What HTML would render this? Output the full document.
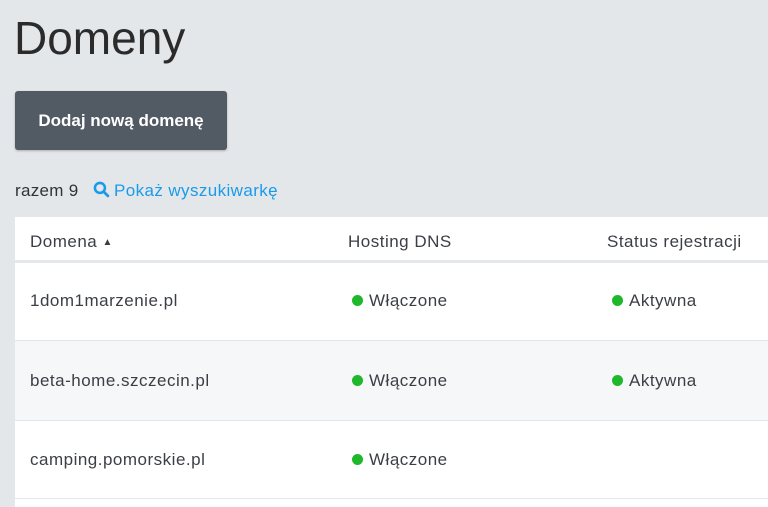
<!DOCTYPE html>
<html><head><meta charset="utf-8"><style>
body{margin:0;width:768px;height:500px;overflow:hidden;background:#e4e7ea;font-family:"Liberation Sans",sans-serif;color:#3b3f45;position:relative}
.a{position:absolute;white-space:nowrap}
h1{position:absolute;left:14px;top:11px;margin:0;font-size:46px;font-weight:normal;color:#2b2b2b;letter-spacing:0px}
.btn{position:absolute;left:15px;top:91px;width:212px;height:59px;background:#525a64;border-radius:3px;color:#fff;font-size:17px;font-weight:bold;line-height:59px;text-align:center;box-shadow:0 1px 2px rgba(0,0,0,.25)}
.tbl{position:absolute;left:15px;top:217px;width:760px;height:290px;background:#fff}
.hdr{position:absolute;left:15px;top:260px;width:760px;height:3px;background:#e4e8ec}
.row2{position:absolute;left:15px;top:340px;width:760px;height:79px;background:#f6f7f9;border-top:1px solid #e2e6ea;border-bottom:1px solid #e2e6ea}
.line{position:absolute;left:15px;top:498px;width:760px;height:1px;background:#e2e6ea}
.t{font-size:17px;color:#3b3f45;letter-spacing:0.5px}
.dot{display:inline-block;width:11px;height:11px;border-radius:50%;background:#1fb82a;margin-right:6px;vertical-align:0}
</style></head><body>
<h1>Domeny</h1>
<div class="btn">Dodaj nową domenę</div>
<div class="a" style="left:15px;top:181px;font-size:17px;color:#333;letter-spacing:0.3px">razem 9</div>
<div class="a" style="left:93px;top:181px;font-size:17px;color:#1a9bea;letter-spacing:0.4px">
<svg width="17" height="17" viewBox="0 0 16 16" style="vertical-align:-2px;margin-right:4px"><circle cx="6.5" cy="6.5" r="4.7" fill="none" stroke="#1a9bea" stroke-width="2.4"/><line x1="10" y1="10" x2="14" y2="14" stroke="#1a9bea" stroke-width="2.6" stroke-linecap="round"/></svg>Pokaż wyszukiwarkę</div>
<div class="tbl"></div>
<div class="hdr"></div>
<div class="row2"></div>
<div class="line"></div>
<div class="a t" style="left:30px;top:232px">Domena <span style="font-size:10px;vertical-align:2px">▲</span></div>
<div class="a t" style="left:348px;top:232px">Hosting DNS</div>
<div class="a t" style="left:607px;top:232px">Status rejestracji</div>
<div class="a t" style="left:30px;top:291px">1dom1marzenie.pl</div>
<div class="a t" style="left:352px;top:291px"><span class="dot"></span>Włączone</div>
<div class="a t" style="left:612px;top:291px"><span class="dot"></span>Aktywna</div>
<div class="a t" style="left:30px;top:371px">beta-home.szczecin.pl</div>
<div class="a t" style="left:352px;top:371px"><span class="dot"></span>Włączone</div>
<div class="a t" style="left:612px;top:371px"><span class="dot"></span>Aktywna</div>
<div class="a t" style="left:30px;top:450px">camping.pomorskie.pl</div>
<div class="a t" style="left:352px;top:450px"><span class="dot"></span>Włączone</div>
</body></html>
